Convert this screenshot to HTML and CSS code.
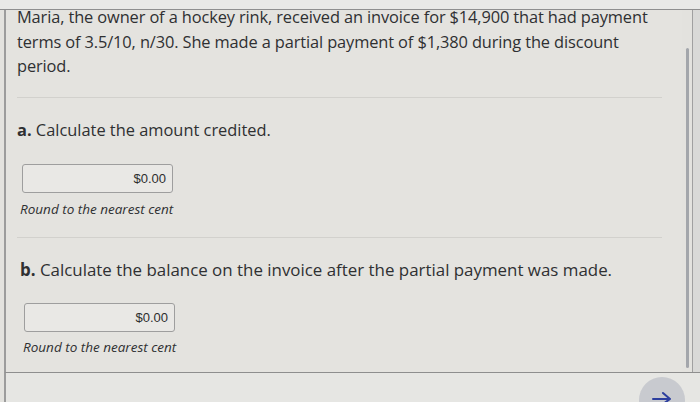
FILE: index.html
```html
<!DOCTYPE html>
<html>
<head>
<meta charset="utf-8">
<link rel="stylesheet" href="styles.css">
</head>
<body>
<div class="screen">
  <div class="topbar"></div>
  <div class="main">
    <div class="panel">
      <p class="problem">Maria, the owner of a hockey rink, received an invoice for $14,900 that had payment terms of 3.5/10, n/30. She made a partial payment of $1,380 during the discount period.</p>
      <hr class="sep">
      <section class="part part-a">
        <p class="q"><b>a.</b> Calculate the amount credited.</p>
        <div class="answer">$0.00</div>
        <p class="hint">Round to the nearest cent</p>
      </section>
      <hr class="sep sep-2">
      <section class="part part-b">
        <p class="q"><b>b.</b> Calculate the balance on the invoice after the partial payment was made.</p>
        <div class="answer">$0.00</div>
        <p class="hint">Round to the nearest cent</p>
      </section>
    </div>
    <div class="rail"><div class="thumb"></div></div>
    <div class="edge"></div>
  </div>
  <div class="footer">
    <div class="next">
      <svg width="22" height="14" viewBox="0 0 22 14"><path d="M2 8 L19 8 M12 2 L19 8 L12 13" fill="none" stroke="#2c3e9e" stroke-width="2" stroke-linecap="round" stroke-linejoin="round"/></svg>
    </div>
  </div>
</div>
</body>
</html>
```

FILE: styles.css
```css
html, body {
  margin: 0;
  padding: 0;
  width: 700px;
  height: 402px;
  overflow: hidden;
  background: #e3e2de;
}
.screen {
  width: 700px;
  height: 402px;
  display: flex;
  flex-direction: column;
  font-family: "Open Sans", "Noto Sans", sans-serif;
  color: #2f3032;
}
.topbar {
  height: 9px;
  background: #e9e9e7;
  border-bottom: 1px solid #8f8f8f;
  flex: none;
}
.main {
  flex: none;
  height: 362px;
  display: flex;
}
.panel {
  flex: 1;
  border-left: 2px solid #9c9c9c;
  margin-left: 4px;
  padding: 0 0 0 11px;
  background: #e4e3df;
}
.rail {
  width: 10px;
  padding-top: 38px;
  flex: none;
  display: flex;
  justify-content: center;
}
.thumb {
  width: 3px;
  height: 320px;
  background: #a3a6ab;
  border-radius: 2px;
}
.edge {
  width: 7px;
  flex: none;
  border-left: 1px solid #a0a0a0;
  background: #d9d9d7;
}
.problem {
  margin: -5px 0 0 0;
  font-size: 16.4px;
  line-height: 24.5px;
  letter-spacing: -0.12px;
  width: 640px;
}
.sep {
  border: 0;
  border-top: 1px solid #d2d1cd;
  margin: 18px 20px 0 0;
}
.sep-2 {
  margin-top: 19px;
}
.q {
  margin: 20px 0 0 0;
  font-size: 16.4px;
  line-height: 24px;
}
.q b {
  font-weight: 700;
}
.answer {
  margin: 22px 0 0 5px;
  width: 143px;
  height: 27px;
  border: 1px solid #9e9e9e;
  border-radius: 3px;
  background: #e9e8e5;
  font-family: "Liberation Sans", Arial, sans-serif;
  font-size: 13px;
  line-height: 27px;
  text-align: right;
  padding-right: 6px;
  color: #2e2e2e;
}
.hint {
  margin: 7px 0 0 3px;
  font-style: italic;
  font-size: 13.5px;
  line-height: 18px;
}
.part-b {
  padding-left: 3px;
}
.part-b .q {
  margin-top: 20px;
  font-size: 16.9px;
}
.part-b .answer {
  margin-top: 21px;
  margin-left: 4px;
  width: 143px;
}
.part-b .hint {
  margin-top: 6px;
}
.footer {
  flex: 1;
  border-top: 1px solid #8e8e8e;
  background: #e6e6e3;
  position: relative;
  overflow: hidden;
  border-left: 2px solid #9c9c9c;
  margin-left: 4px;
}
.next {
  position: absolute;
  left: 633px;
  top: 4px;
  width: 46px;
  height: 46px;
  border-radius: 50%;
  background: #c8cacf;
  display: flex;
  justify-content: center;
  padding-top: 14px;
  box-sizing: border-box;
}
```
